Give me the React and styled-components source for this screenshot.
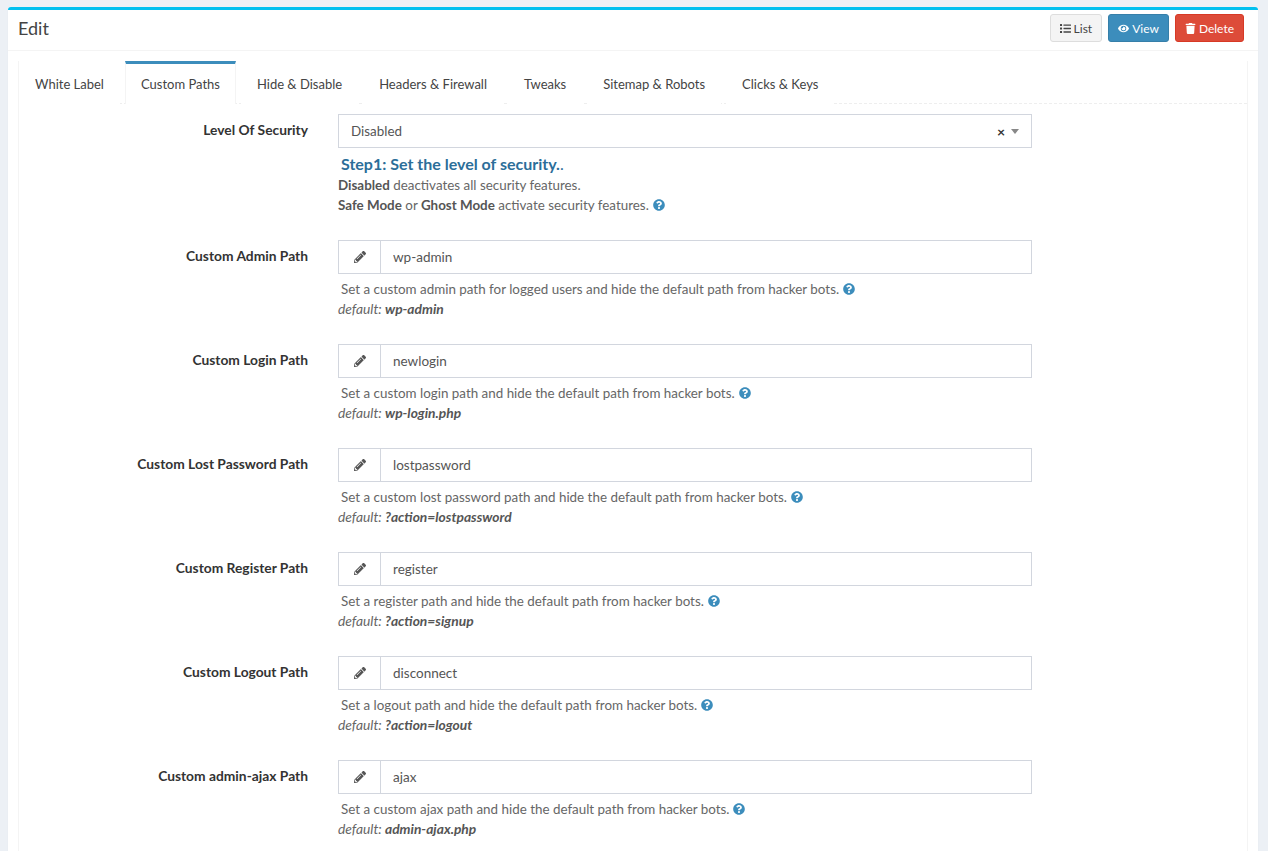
import React from "react";
import styled, { createGlobalStyle } from "styled-components";
import {
  FaList,
  FaEye,
  FaTrash,
  FaPencilAlt,
  FaQuestionCircle,
} from "react-icons/fa";

const GlobalStyle = createGlobalStyle`
  html, body {
    margin: 0;
    background: #ecf0f5;
    font-family: "Lato", "Open Sans", sans-serif;
    font-size: 13.4px;
    color: #333;
  }
  * { box-sizing: border-box; }
`;

const Page = styled.div`
  padding: 7px 10px 0 8px;
`;

const Box = styled.div`
  background: #fff;
  border-top: 3px solid #00c0ef;
  border-radius: 3px 3px 0 0;
  box-shadow: 0 1px 1px rgba(0, 0, 0, 0.1);
`;

const BoxHeader = styled.div`
  display: flex;
  align-items: center;
  justify-content: space-between;
  padding: 4px 14px 8px 10px;
  border-bottom: 1px solid #f4f4f4;
`;

const Title = styled.h3`
  margin: 0;
  font-size: 18px;
  font-weight: 400;
  color: #444;
  line-height: 28px;
`;

const Tools = styled.div`
  display: flex;
  gap: 6px;
`;

const variants = {
  default: { bg: "#f4f4f4", border: "#ddd", color: "#444" },
  primary: { bg: "#3c8dbc", border: "#367fa9", color: "#fff" },
  danger: { bg: "#dd4b39", border: "#d73925", color: "#fff" },
};

const Btn = styled.button`
  display: inline-flex;
  align-items: center;
  gap: 3px;
  height: 28px;
  padding: 0 9px;
  font-family: inherit;
  font-size: 12px;
  border-radius: 3px;
  border: 1px solid ${({ $variant }) => variants[$variant].border};
  background: ${({ $variant }) => variants[$variant].bg};
  color: ${({ $variant }) => variants[$variant].color};
  cursor: pointer;

  svg {
    font-size: 11px;
  }
`;

const BoxBody = styled.div`
  padding: 10px;
`;

const TabsWrap = styled.div`
  border-left: 1px solid #f4f4f4;
  border-right: 1px solid #f4f4f4;
`;

const TabBar = styled.ul`
  display: flex;
  margin: 0;
  padding: 0;
  list-style: none;
  border-bottom: 1px dashed #eee;
`;

const Tab = styled.li`
  padding: 10px 15px;
  margin-right: 5px;
  line-height: 20px;
  font-size: 13px;
  color: #444;
  border-top: 3px solid ${({ $active }) => ($active ? "#3c8dbc" : "transparent")};
  border-left: 1px solid ${({ $active }) => ($active ? "#f4f4f4" : "transparent")};
  border-right: 1px solid ${({ $active }) => ($active ? "#f4f4f4" : "transparent")};
  margin-bottom: -1px;
  background: #fff;
  cursor: pointer;
`;

const TabContent = styled.div`
  padding: 10px;
`;

const FormRow = styled.div`
  display: flex;
  gap: 30px;
  margin-bottom: 25px;
`;

const Label = styled.label`
  width: 279px;
  flex: none;
  text-align: right;
  font-weight: 700;
  font-size: 13.8px;
  padding-top: 6px;
  line-height: 20px;
  color: #333;
`;

const Field = styled.div`
  width: 694px;
  flex: none;
`;

const SelectBox = styled.div`
  display: flex;
  align-items: center;
  height: 34px;
  padding: 0 12px 0 12px;
  border: 1px solid #d2d6de;
  color: #555;
`;

const SelectValue = styled.span`
  flex: 1;
`;

const ClearMark = styled.span`
  font-weight: 700;
  color: #333;
  font-size: 14px;
  margin-right: 6px;
`;

const Caret = styled.span`
  width: 0;
  height: 0;
  border-left: 4px solid transparent;
  border-right: 4px solid transparent;
  border-top: 5px solid #888;
`;

const Step = styled.div`
  margin-top: 5px;
  padding-left: 3px;
  line-height: 22px;
  font-size: 16px;
  color: #2c6e99;

  b {
    font-weight: 700;
  }
`;

const Note = styled.div`
  line-height: 20px;
  color: #666;

  b {
    color: #555;
  }
`;

const InputGroup = styled.div`
  display: flex;
  height: 34px;
`;

const Addon = styled.span`
  width: 43px;
  flex: none;
  display: flex;
  align-items: center;
  justify-content: center;
  border: 1px solid #d2d6de;
  color: #555;
  font-size: 12px;
`;

const TextInput = styled.input`
  flex: 1;
  border: 1px solid #d2d6de;
  border-left: none;
  padding: 6px 12px;
  font-family: inherit;
  font-size: 13.5px;
  color: #555;
  outline: none;
`;

const Help = styled.div`
  margin-top: 5px;
  padding-left: 3px;
  line-height: 20px;
  color: #666;
`;

const Default = styled.div`
  line-height: 20px;
  font-size: 13.8px;
  font-style: italic;
  color: #666;

  b {
    color: #555;
  }
`;

const Hint = styled(FaQuestionCircle)`
  color: #3c8dbc;
  font-size: 12px;
  vertical-align: -1px;
  margin-left: 4px;
`;

const tabs = [
  "White Label",
  "Custom Paths",
  "Hide & Disable",
  "Headers & Firewall",
  "Tweaks",
  "Sitemap & Robots",
  "Clicks & Keys",
];

const paths = [
  {
    label: "Custom Admin Path",
    value: "wp-admin",
    help: "Set a custom admin path for logged users and hide the default path from hacker bots.",
    def: "wp-admin",
  },
  {
    label: "Custom Login Path",
    value: "newlogin",
    help: "Set a custom login path and hide the default path from hacker bots.",
    def: "wp-login.php",
  },
  {
    label: "Custom Lost Password Path",
    value: "lostpassword",
    help: "Set a custom lost password path and hide the default path from hacker bots.",
    def: "?action=lostpassword",
  },
  {
    label: "Custom Register Path",
    value: "register",
    help: "Set a register path and hide the default path from hacker bots.",
    def: "?action=signup",
  },
  {
    label: "Custom Logout Path",
    value: "disconnect",
    help: "Set a logout path and hide the default path from hacker bots.",
    def: "?action=logout",
  },
  {
    label: "Custom admin-ajax Path",
    value: "ajax",
    help: "Set a custom ajax path and hide the default path from hacker bots.",
    def: "admin-ajax.php",
  },
];

const App = () => {
  return (
    <Page>
      <GlobalStyle />
      <Box>
        <BoxHeader>
          <Title>Edit</Title>
          <Tools>
            <Btn $variant="default">
              <FaList /> List
            </Btn>
            <Btn $variant="primary">
              <FaEye /> View
            </Btn>
            <Btn $variant="danger">
              <FaTrash /> Delete
            </Btn>
          </Tools>
        </BoxHeader>
        <BoxBody>
          <TabsWrap>
            <TabBar>
              {tabs.map((t) => (
                <Tab key={t} $active={t === "Custom Paths"}>
                  {t}
                </Tab>
              ))}
            </TabBar>
            <TabContent>
              <FormRow>
                <Label>Level Of Security</Label>
                <Field>
                  <SelectBox>
                    <SelectValue>Disabled</SelectValue>
                    <ClearMark>×</ClearMark>
                    <Caret />
                  </SelectBox>
                  <Step>
                    <b>Step1: Set the level of security.</b>.
                  </Step>
                  <Note>
                    <b>Disabled</b> deactivates all security features.
                  </Note>
                  <Note>
                    <b>Safe Mode</b> or <b>Ghost Mode</b> activate security
                    features.
                    <Hint />
                  </Note>
                </Field>
              </FormRow>
              {paths.map((p) => (
                <FormRow key={p.label}>
                  <Label>{p.label}</Label>
                  <Field>
                    <InputGroup>
                      <Addon>
                        <FaPencilAlt />
                      </Addon>
                      <TextInput defaultValue={p.value} />
                    </InputGroup>
                    <Help>
                      {p.help}
                      <Hint />
                    </Help>
                    <Default>
                      default: <b>{p.def}</b>
                    </Default>
                  </Field>
                </FormRow>
              ))}
            </TabContent>
          </TabsWrap>
        </BoxBody>
      </Box>
    </Page>
  );
};

export default App;
